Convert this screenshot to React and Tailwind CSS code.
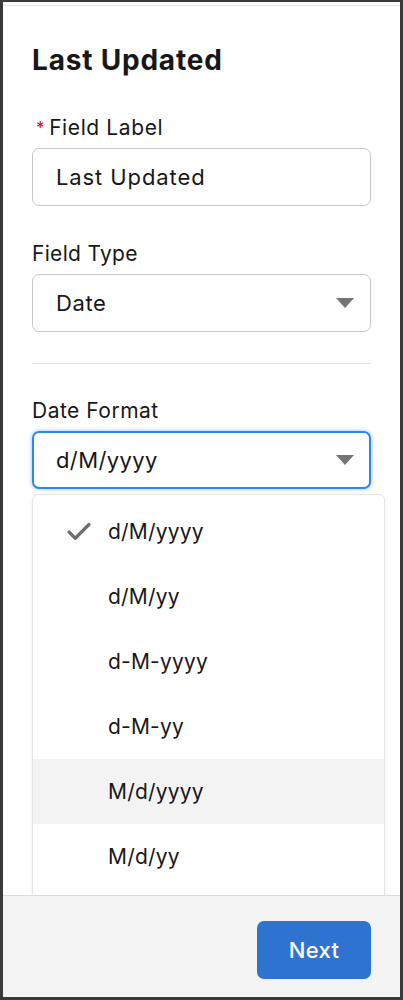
import { Check } from "lucide-react";

const options = ["d/M/yyyy", "d/M/yy", "d-M-yyyy", "d-M-yy", "M/d/yyyy", "M/d/yy", "yyyy-M-d"];

const Caret = () => (
  <svg width="18" height="10" viewBox="0 0 18 10" className="shrink-0">
    <path d="M0 0 H18 L9 10 Z" fill="#747474" />
  </svg>
);

const App = () => {
  return (
    <div
      className="w-[403px] h-[1000px] bg-white flex flex-col border-t-2 border-x-[3px] border-b-[3px] border-[#3a3a3a] text-[#181818] overflow-hidden"
      style={{ fontFamily: "Inter, 'Liberation Sans', sans-serif" }}
    >
      {/* Body */}
      <div className="flex-1 relative pt-[3px]">
        <div className="h-px bg-[#e5e5e5]" />
        <div className="px-[29px]">
          <h1 className="mt-[38px] text-[28px] leading-[32px] font-bold tracking-[0.8px]">Last Updated</h1>

          <label className="mt-[40px] flex items-center text-[21px] leading-[24px] tracking-[0.6px]">
            <span className="text-[#ea001e] text-[17px] mr-[4px] ml-[4px]">*</span>Field Label
          </label>
          <div className="mt-[8px] h-[58px] rounded-[7px] border border-[#c9c9c9] flex items-center px-[23px] text-[22px] tracking-[0.9px]">
            Last Updated
          </div>

          <label className="mt-[36px] block text-[21px] leading-[24px] tracking-[0.3px]">Field Type</label>
          <div className="mt-[8px] h-[58px] rounded-[7px] border border-[#c9c9c9] flex items-center justify-between pl-[23px] pr-[16px] text-[22px] tracking-[0.6px]">
            <span>Date</span>
            <Caret />
          </div>

          <div className="mt-[31px] h-px bg-[#e0e0e0]" />

          <label className="mt-[35px] block text-[21px] leading-[24px] tracking-[0.5px]">Date Format</label>
          <div className="relative mt-[8px]">
            <div className="h-[58px] rounded-[7px] border-2 border-[#2f86f0] shadow-[0_0_4px_#8fbcf5] flex items-center justify-between pl-[22px] pr-[15px] text-[22px] tracking-[0.4px]">
              <span>d/M/yyyy</span>
              <Caret />
            </div>

            {/* Dropdown menu */}
            <div className="absolute left-0 top-full mt-[5px] w-[353px] bg-white border border-[#e5e5e5] rounded-t-[6px] shadow-[0_2px_4px_rgba(0,0,0,0.08)] pt-[4px]">
              {options.map((o, i) => (
                <div
                  key={o}
                  className={`h-[65px] flex items-center text-[21px] tracking-[0.2px] ${i === 4 ? "bg-[#f3f3f3]" : ""}`}
                >
                  <div className="w-[75px] flex justify-end pr-[14px]">
                    {i === 0 && <Check size={30} strokeWidth={2.6} color="#706e6b" />}
                  </div>
                  <span>{o}</span>
                </div>
              ))}
            </div>
          </div>
        </div>
      </div>

      {/* Footer */}
      <div className="relative z-10 h-[102px] shrink-0 bg-[#f3f3f3] border-t border-[#dddbda] flex justify-end items-start pt-[25px] pr-[29px]">
        <button className="w-[114px] h-[58px] rounded-[7px] bg-[#2f73d0] text-white text-[22px] font-medium tracking-[0.3px]">
          Next
        </button>
      </div>
    </div>
  );
};

export default App;
